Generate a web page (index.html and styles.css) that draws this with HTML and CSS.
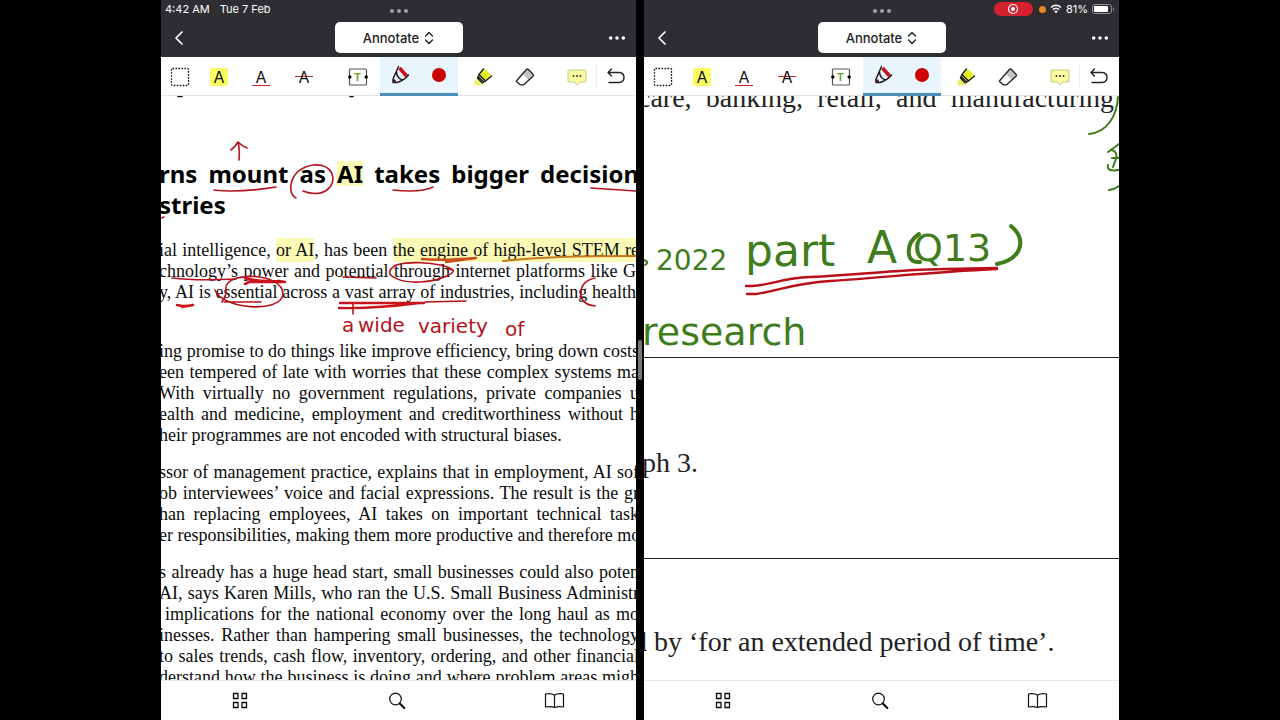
FILE: index.html
```html
<!DOCTYPE html>
<html lang="en">
<head>
<meta charset="utf-8">
<meta name="viewport" content="width=device-width, initial-scale=1">
<title>Annotate</title>
<link rel="stylesheet" href="styles.css">
</head>
<body>
<svg class="symbols" aria-hidden="true">
  <symbol id="i-back" viewBox="0 0 16 16"><path d="M11 2 5 8l6 6" fill="none" stroke="currentColor" stroke-width="1.7" stroke-linecap="round" stroke-linejoin="round"/></symbol>
  <symbol id="i-dots" viewBox="0 0 20 6"><g fill="currentColor"><circle cx="3" cy="3" r="2"/><circle cx="10" cy="3" r="2"/><circle cx="17" cy="3" r="2"/></g></symbol>
  <symbol id="i-updown" viewBox="0 0 10 14"><path d="M1.5 5 5 1.5 8.500 5M1.500 9 5 12.500 8.500 9" fill="none" stroke="currentColor" stroke-width="1.300" stroke-linecap="round" stroke-linejoin="round"/></symbol>
  <symbol id="i-select" viewBox="0 0 20 20"><rect x="1.500" y="1.500" width="17" height="17" rx="1" fill="none" stroke="#111" stroke-width="1.300" stroke-dasharray="1.600 1.400"/></symbol>
  <symbol id="i-textbox" viewBox="0 0 20 20"><rect x="1.500" y="2" width="17" height="16" rx="1" fill="#fff" stroke="#555" stroke-width="1.200"/><circle cx="1.800" cy="10" r="1.700"/><circle cx="18.200" cy="10" r="1.700"/></symbol>
  <symbol id="i-pen" viewBox="0 0 20 20"><path d="m9.500 3 7 8" stroke="#c8101c" stroke-width="3.600"/><path d="M8.500 1.500 3 14v3.500h4q7-2 11.500-7.500M6.500 6.500Q6.500 13 12.500 15" fill="none" stroke="#1d1416" stroke-width="1.400" stroke-linejoin="round" stroke-linecap="round"/><circle cx="4.200" cy="16" r="1.800" fill="#4d1b28"/></symbol>
  <symbol id="i-marker" viewBox="0 0 20 20"><path d="m1 15 4-4 5 5-2 2.500H2z" fill="#eef06a"/><path d="m7 8 5-6 6 6-6 6z" fill="#e8f01c"/><path d="M10.500 2 6 7.500 12.500 14 18.500 9M6 7.500 4.500 11l4.800 5 3.200-2M5.200 9.500l5.500 5.500" fill="none" stroke="#1b1b12" stroke-width="1.400" stroke-linejoin="round" stroke-linecap="round"/></symbol>
  <symbol id="i-eraser" viewBox="0 0 20 20"><path d="M8 7 12.500 2l6 6-5 5z" fill="#c4c4c4"/><path d="m1.800 13.500 9.600-11q1-1 2 0l4.600 4.800q1 1 0 2l-9.300 8.500H5.200l-3.400-3q-.8-.6 0-1.300z" fill="none" stroke="#222" stroke-width="1.300" stroke-linejoin="round"/></symbol>
  <symbol id="i-note" viewBox="0 0 20 20"><path d="M2 3h16q1 0 1 1v10q0 1-1 1h-5l-3 3-3-3H2q-1 0-1-1V4q0-1 1-1z" fill="#fbfba0" stroke="#c9c98c"/><g fill="#3c3c20"><circle cx="6.500" cy="9" r="1"/><circle cx="10" cy="9" r="1"/><circle cx="13.500" cy="9" r="1"/></g></symbol>
  <symbol id="i-undo" viewBox="0 0 20 20"><path d="M5.500 2 2 5.500 5.500 9M2 5.500h11q5 .3 5 5t-5 5H3" fill="none" stroke="#222" stroke-width="1.400" stroke-linecap="round" stroke-linejoin="round"/></symbol>
  <symbol id="i-grid" viewBox="0 0 16 18"><path d="M1.500 1.500h4.500v5H1.500zM10 1.500h4.500v5H10zM1.500 10.500h4.500v5H1.500zM10 10.500h4.500v5H10z" fill="none" stroke="#111" stroke-width="1.300"/></symbol>
  <symbol id="i-search" viewBox="0 0 18 18"><circle cx="7.500" cy="7" r="5.800" fill="none" stroke="#111" stroke-width="1.200"/><path d="m11.800 11.500 4.500 4.500" stroke="#111" stroke-width="2.200" stroke-linecap="round"/></symbol>
  <symbol id="i-book" viewBox="0 0 20 18"><path d="M10 3Q6 .8 1 2v13q5-1 9 .5 4-1.500 9-.5V2q-5-1.200-9 1zV15.500" fill="none" stroke="#111" stroke-width="1.200" stroke-linejoin="round"/></symbol>
</svg>

<main class="screen">
  <section class="pane" aria-label="Article">
    <header class="header">
      <div class="status">
        <div class="status-side"><span>4:42 AM</span><span>Tue 7 Feb</span></div>
        <svg class="multitask"><use href="#i-dots"/></svg>
        <div class="status-side"></div>
      </div>
      <nav class="nav">
        <button class="nav-btn" aria-label="Back"><svg class="ico16"><use href="#i-back"/></svg></button>
        <button class="mode">Annotate <svg class="updown"><use href="#i-updown"/></svg></button>
        <button class="nav-btn nav-end" aria-label="More"><svg class="more"><use href="#i-dots"/></svg></button>
      </nav>
    </header>
    <div class="tools">
      <button class="tool" aria-label="Select"><svg class="ico"><use href="#i-select"/></svg></button>
      <button class="tool"><span class="letter letter-hl">A</span></button>
      <button class="tool"><span class="letter letter-ul">A</span></button>
      <button class="tool"><span class="letter letter-st">A</span></button>
      <button class="tool tool-text"><svg class="ico"><use href="#i-textbox"/></svg><span class="t">T</span></button>
      <button class="tool active" aria-label="Pen"><svg class="ico"><use href="#i-pen"/></svg></button>
      <button class="tool active" aria-label="Colour"><span class="swatch"></span></button>
      <button class="tool" aria-label="Highlighter"><svg class="ico"><use href="#i-marker"/></svg></button>
      <button class="tool" aria-label="Eraser"><svg class="ico"><use href="#i-eraser"/></svg></button>
      <button class="tool tool-note" aria-label="Note"><svg class="ico"><use href="#i-note"/></svg></button>
      <button class="tool tool-undo" aria-label="Undo"><svg class="ico"><use href="#i-undo"/></svg></button>
    </div>
    <article class="doc article">
      <h1 class="title"><span class="line">rns mount as <mark>AI</mark> takes bigger decision</span><span class="line short">stries</span></h1>
      <p class="para lead"><span class="line">ial intelligence, <mark>or AI</mark>, has been <mark>the engine of high-level STEM re</mark></span><span class="line full">chnology’s power and potential through internet platforms like G</span><span class="line full">y, AI is essential across a vast array of industries, including health</span></p>
      <p class="para"><span class="line">ing promise to do things like improve efficiency, bring down costs</span><span class="line">een tempered of late with worries that these complex systems ma</span><span class="line">With virtually no government regulations, private companies u</span><span class="line">ealth and medicine, employment and creditworthiness without h</span><span class="line short">heir programmes are not encoded with structural biases.</span></p>
      <p class="para"><span class="line">ssor of management practice, explains that in employment, AI sof</span><span class="line">ob interviewees’ voice and facial expressions. The result is the gr</span><span class="line">han replacing employees, AI takes on important technical task</span><span class="line">er responsibilities, making them more productive and therefore mo</span></p>
      <p class="para"><span class="line">s already has a huge head start, small businesses could also poten</span><span class="line">AI, says Karen Mills, who ran the U.S. Small Business Administr</span><span class="line inset">implications for the national economy over the long haul as mo</span><span class="line">inesses. Rather than hampering small businesses, the technology</span><span class="line">to sales trends, cash flow, inventory, ordering, and other financial</span><span class="line">derstand how the business is doing and where problem areas migh</span></p>
      <svg class="ink" width="475" height="584" viewBox="161 96 475 584">
        <g fill="none" stroke="#b3141c" stroke-width="1.600" stroke-linecap="round" stroke-linejoin="round">
          <path d="M178 96.500h4M350 96.500h3" stroke="#111"/>
          <path d="M239 160Q240 150 238 142M231 150q4-3 7-8 4 4 9 6"/>
          <path d="M214 190q24 3 62-3"/>
          <path d="M296 198c-10-5-7-29 17-33 21-2 25 17 14 25-7 5-17 4-24 1"/>
          <path d="M393 190q28 3 40-3M591 188l45 3M161 218l3-1"/>
          <path d="M422 259q20 2 54-1l-30 4" stroke="#c8501c" stroke-width="2.400"/>
          <path d="M503 261q40-5 133-5" stroke="#c77a1c" stroke-width="2"/>
          <path d="M172 278q24 3 64 1M343 277l33 1"/>
          <path d="M245 278q12 4 34 3l6 1h-36l-4 2" stroke="#c9141c" stroke-width="2.600"/>
          <path d="M453 270c-10-8-55-11-62-1-7 8 13 14 29 13 20-1 36-9 33-12l-5-1"/>
          <path d="M215 290c7 19 66 24 68 4 0-22-59-23-57-5 1 8-3 10-4 13M224 302h37"/>
          <path d="M177 305q7 2 16 0l-11 2" stroke="#c9141c" stroke-width="2.600"/>
          <path d="M340 303l84 0M339 308q34 1 80-5" stroke="#c9141c" stroke-width="2.400"/>
          <path d="M425 302l41-1M353 304v10M595 278q-14 3-14 15-1 11 14 13"/>
        </g>
        <g class="hand red"><text x="342" y="332">a</text><text x="358" y="332">wide</text><text x="418" y="333">variety</text><text x="505" y="336">of</text></g>
      </svg>
    </article>
    <footer class="bottom">
      <button class="tab" aria-label="Pages"><svg class="ico18"><use href="#i-grid"/></svg></button>
      <button class="tab" aria-label="Search"><svg class="ico18"><use href="#i-search"/></svg></button>
      <button class="tab" aria-label="Outline"><svg class="ico-book"><use href="#i-book"/></svg></button>
    </footer>
  </section>

  <div class="divider"><span class="grip"></span></div>

  <section class="pane" aria-label="Questions">
    <header class="header">
      <div class="status">
        <div class="status-side"></div>
        <svg class="multitask"><use href="#i-dots"/></svg>
        <div class="status-side status-right">
          <span class="rec"><svg width="12" height="12" viewBox="0 0 12 12"><circle cx="6" cy="6" r="4.500" fill="none" stroke="#fff" stroke-width="1.200"/><circle cx="6" cy="6" r="2" fill="#fff"/></svg></span>
          <span class="mic"></span>
          <svg width="12" height="10" viewBox="0 0 12 10"><path d="M1 3.500q5-4.500 10 0M2.800 5.600q3.200-2.800 6.400 0" fill="none" stroke="#fff" stroke-width="1.500"/><path d="M4.200 7.300q1.800-1.500 3.600 0L6 9.300z" fill="#fff"/></svg>
          <span>81%</span>
          <svg width="23" height="10" viewBox="0 0 23 10"><rect x=".5" y=".5" width="19" height="9" rx="2.500" fill="none" stroke="#8d8d92"/><rect x="2" y="2" width="14" height="6" rx="1" fill="#fff"/><path d="M21.500 3.500v3" stroke="#8d8d92"/></svg>
        </div>
      </div>
      <nav class="nav">
        <button class="nav-btn" aria-label="Back"><svg class="ico16"><use href="#i-back"/></svg></button>
        <button class="mode">Annotate <svg class="updown"><use href="#i-updown"/></svg></button>
        <button class="nav-btn nav-end" aria-label="More"><svg class="more"><use href="#i-dots"/></svg></button>
      </nav>
    </header>
    <div class="tools">
      <button class="tool" aria-label="Select"><svg class="ico"><use href="#i-select"/></svg></button>
      <button class="tool"><span class="letter letter-hl">A</span></button>
      <button class="tool"><span class="letter letter-ul">A</span></button>
      <button class="tool"><span class="letter letter-st">A</span></button>
      <button class="tool tool-text"><svg class="ico"><use href="#i-textbox"/></svg><span class="t">T</span></button>
      <button class="tool active" aria-label="Pen"><svg class="ico"><use href="#i-pen"/></svg></button>
      <button class="tool active" aria-label="Colour"><span class="swatch"></span></button>
      <button class="tool" aria-label="Highlighter"><svg class="ico"><use href="#i-marker"/></svg></button>
      <button class="tool" aria-label="Eraser"><svg class="ico"><use href="#i-eraser"/></svg></button>
      <button class="tool tool-note" aria-label="Note"><svg class="ico"><use href="#i-note"/></svg></button>
      <button class="tool tool-undo" aria-label="Undo"><svg class="ico"><use href="#i-undo"/></svg></button>
    </div>
    <article class="doc questions">
      <p class="row row-first"><span class="line">care, banking, retail, and manufacturing</span></p>
      <p class="row row-mid">ph 3.</p>
      <p class="row row-last">d by ‘for an extended period of time’.</p>
      <svg class="ink" width="475" height="584" viewBox="644 96 475 584">
        <g fill="none" stroke="#3f7d1c" stroke-width="2" stroke-linecap="round" stroke-linejoin="round">
          <path d="M1118 97c-1 18-10 35-29 37M1108 152l11-8M1111 150q7 1 5 9l-3 8M1112 158h7M1108 165q-2 7 11 5M1109 190q6-1 10-4"/>
          <path d="M644 260q6 2 1 5"/>
          <path d="M1011 226q11 9 9 20-3 14-23 18" stroke-width="4"/>
          <path d="M919 234q-12 8-10 21 2 8 11 7" stroke-width="4"/>
        </g>
        <g fill="none" stroke="#b80f18" stroke-width="2.400" stroke-linecap="round" stroke-linejoin="round">
          <path d="M746 286h6c20-1 30-8 58-9 50-2 80-7 135-8l52-1M747 294h9c22-3 38-11 74-13 60-4 100-9 167-12"/>
        </g>
        <g class="hand green"><text x="656" y="270" class="h-year">2022</text><text x="745" y="266" class="h-big">part</text><text x="867" y="263" class="h-big">A</text><text x="913" y="261" class="h-mid">Q13</text><text x="642" y="345" class="h-mid">research</text></g>
      </svg>
    </article>
    <footer class="bottom">
      <button class="tab" aria-label="Pages"><svg class="ico18"><use href="#i-grid"/></svg></button>
      <button class="tab" aria-label="Search"><svg class="ico18"><use href="#i-search"/></svg></button>
      <button class="tab" aria-label="Outline"><svg class="ico-book"><use href="#i-book"/></svg></button>
    </footer>
  </section>
</main>
</body>
</html>
```
FILE: styles.css
```css
* { box-sizing: border-box; }
body { margin: 0; background: #000; font-family: Inter, "Liberation Sans", sans-serif; }
h1, p { margin: 0; }
button { appearance: none; border: 0; padding: 0; margin: 0; background: none; font: inherit; color: inherit; }
svg { display: block; flex: none; }
.symbols { position: absolute; width: 0; height: 0; }

.screen {
  display: grid;
  grid-template-columns: minmax(0, 1fr) 8px minmax(0, 1fr);
  height: 100vh;
  padding: 0 161px;
}
.pane { display: flex; flex-direction: column; min-width: 0; min-height: 0; background: #fff; }
.divider { display: flex; align-items: center; justify-content: center; background: #000; }
.grip { width: 4px; height: 40px; border-radius: 2px; background: #77777b; }

.header { background: #2e2d32; color: #fff; height: 57px; }
.status { display: grid; grid-template-columns: 1fr auto 1fr; align-items: center; height: 18px; font-size: 11px; }
.status-side { display: flex; gap: 10px; padding-left: 4px; }
.status-right { justify-content: flex-end; align-items: center; gap: 4px; padding: 0 4px 0 0; }
.multitask { width: 20px; height: 6px; color: #a0a0a5; margin-top: 4px; }
.rec { display: flex; align-items: center; justify-content: center; width: 39px; height: 14px; margin-right: 2px; border-radius: 7px; background: #d4202f; }
.mic { width: 7px; height: 7px; border-radius: 50%; background: #e8842a; }
.nav { display: grid; grid-template-columns: 1fr auto 1fr; align-items: center; height: 39px; }
.nav-btn { display: flex; padding: 4px 10px; }
.nav-end { justify-self: end; }
.ico16 { width: 16px; height: 16px; }
.more { width: 18px; height: 6px; }
.mode {
  display: flex; align-items: center; justify-content: center; gap: 5px;
  width: 128px; height: 31px; border-radius: 5px;
  background: #fff; color: #1c1c1e; font-size: 13px; font-weight: 500;
}
.updown { width: 10px; height: 14px; }

.tools {
  display: grid;
  grid-template-columns: 38fr 40fr 44fr 42fr 55fr 40fr 38fr 49fr 36fr 53fr 40fr;
  height: 39px;
  flex: none;
  border-bottom: 1px solid #e4e4e6;
}
.tool { position: relative; display: flex; align-items: center; justify-content: center; height: 39px; }
.tool-text { padding-left: 10px; }
.tool-note { padding-left: 15px; }
.tool-undo::before { content: ""; position: absolute; left: 0; top: 8px; bottom: 8px; width: 1px; background: #ececee; }
.active { background: #e9f5fc; border-bottom: 3px solid #4a8fba; }
.ico { width: 20px; height: 20px; }
.letter { width: 18px; height: 18px; line-height: 18px; font-size: 16px; color: #111; text-align: center; }
.letter-hl { background: #fbfb62; border-radius: 2px; }
.letter-ul { border-bottom: 1px solid #c8202a; }
.letter-st { background: linear-gradient(#b82a35, #b82a35) center / 18px 1px no-repeat; }
.t { position: absolute; left: 10px; right: 0; text-align: center; font-size: 11px; font-weight: 600; color: #57a31f; }
.swatch { width: 14px; height: 14px; border-radius: 50%; background: #cc0000; }

.doc { position: relative; flex: 1; min-height: 0; overflow: hidden; font-family: "Liberation Serif", serif; color: #0c0c0c; }
.ink { position: absolute; left: 0; top: 0; }
.line { display: block; margin: 0 -3px 0 -2px; white-space: nowrap; text-align: justify; text-align-last: justify; }
.full { margin-right: 0; }
.short { text-align-last: left; }
.inset { margin-left: 4px; }
mark { background: #fafab4; color: inherit; padding: 2px 0; }

.title { padding-top: 62px; font: bold 24px/31px "Noto Sans", "Open Sans", sans-serif; color: #000; }
.title mark { padding: 0; background: linear-gradient(#fafab4, #fafab4) center / 100% 25px no-repeat; }
.para { font-size: 18px; line-height: 21px; margin-top: 16px; }
.lead { margin: 20px 0 38px; }

.questions { color: #222; font-size: 28px; line-height: 32px; }
.row { white-space: nowrap; }
.row-first { height: 276px; margin-top: -14px; padding-right: 5px; border-bottom: 1px solid #222; }
.row-first .line { margin-left: -6px; margin-right: 0; }
.row-mid { height: 201px; margin-left: -2px; padding-top: 89px; border-bottom: 1px solid #222; }
.row-last { padding-top: 67px; margin-left: -11px; }

.hand { font-family: "DejaVu Sans", sans-serif; font-size: 20px; }
.red { fill: #b3141c; }
.green { fill: #3f7d1c; }
.h-year { font-size: 28px; }
.h-mid { font-size: 38px; }
.h-big { font-size: 44px; }

.bottom { display: grid; grid-template-columns: repeat(3, 1fr); flex: none; height: 40px; padding-right: 3px; border-top: 1px solid #e8e8ea; background: #fdfdfd; }
.tab { display: flex; align-items: center; justify-content: center; }
.ico18 { width: 18px; height: 18px; }
.ico-book { width: 21px; height: 18px; }
```
